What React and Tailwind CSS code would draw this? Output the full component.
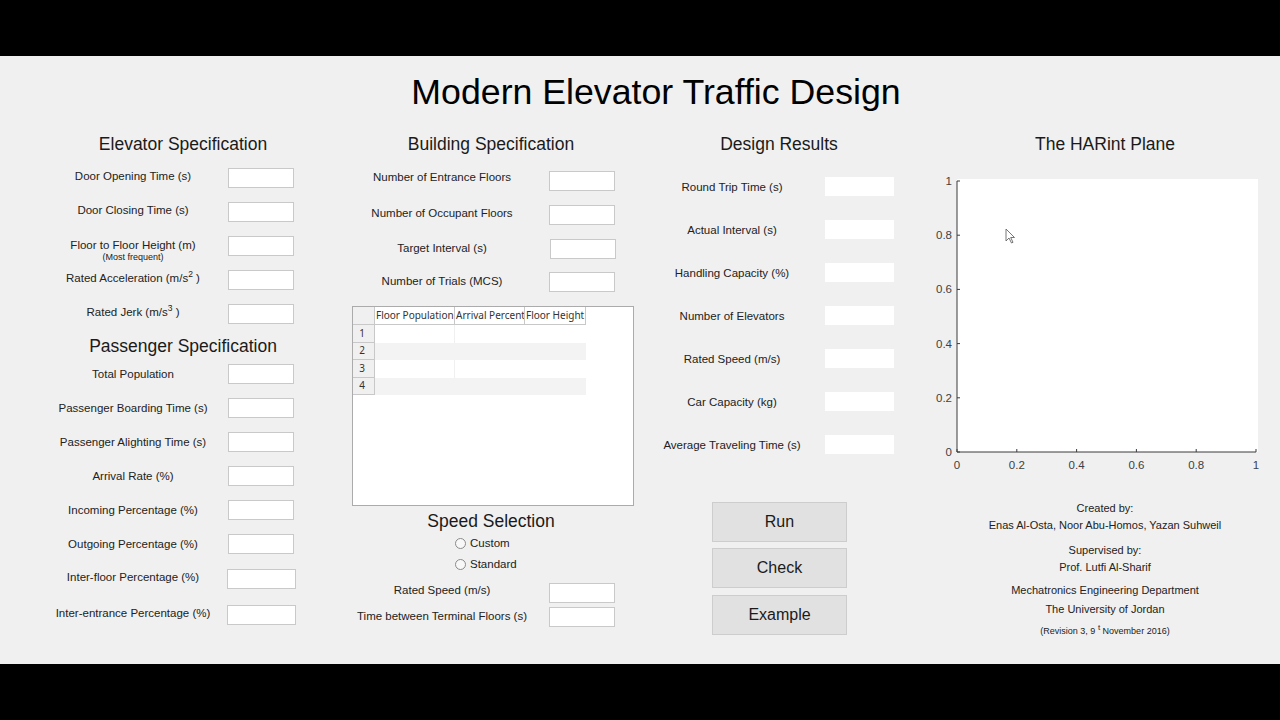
import React from "react";

const font = { fontFamily: '"Liberation Sans", Arial, sans-serif' };

const Field = ({ wide }) => (
  <div
    className={`h-[20px] bg-white border border-[#c9c9c9] ${wide ? "w-[69px] ml-[11px]" : "w-[66px] ml-[12px]"}`}
  />
);

const Row = ({ label, h = "h-[34px]", wide, sub, sup, up }) => (
  <div className={`flex items-center ${h}`}>
    <div className={`w-[166px] text-center text-[11.5px] text-[#222] leading-[13px] ${up ? "pb-[4px]" : ""}`}>
      {sub ? (
        <div className="mt-[8px]">
          <div>{label}</div>
          <div className="text-[9px] leading-[10px]">{sub}</div>
        </div>
      ) : (
        <span>
          {label}
          {sup && (
            <>
              <sup className="text-[8.5px]">{sup}</sup> )
            </>
          )}
        </span>
      )}
    </div>
    <Field wide={wide} />
  </div>
);

const BRow = ({ label, h, shift, pb = "pb-[3px]" }) => (
  <div className={`flex items-center ${h}`}>
    <div className={`w-[188px] text-center text-[11.5px] text-[#222] ${pb}`}>{label}</div>
    <div className={`h-[20px] w-[66px] bg-white border border-[#c9c9c9] ${shift ? "ml-[14px]" : "ml-[13px]"}`} />
  </div>
);

const Result = ({ label }) => (
  <div className="flex items-center h-[43px]">
    <div className="w-[144px] text-center text-[11.5px] text-[#222] pt-[2px]">{label}</div>
    <div className="ml-[21px] w-[69px] h-[19px] bg-white" />
  </div>
);

const Header = ({ children, className = "h-[28px]" }) => (
  <div className={`flex items-center justify-center text-[17.5px] text-[#1a1a1a] ${className}`}>{children}</div>
);

const Radio = ({ label }) => (
  <div className="flex items-center h-[21px] pl-[107px] text-[11.5px] text-[#222]">
    <span className="w-[11px] h-[11px] rounded-full border border-[#8a8a8a] bg-[#f8f8f8] mr-[4px]" />
    {label}
  </div>
);

const Table = () => {
  const cols = [
    ["Floor Population", "w-[80px]"],
    ["Arrival Percent", "w-[70px]"],
    ["Floor Height", "w-[61px]"],
  ];
  return (
    <div
      className="ml-[4px] mt-[8px] w-[282px] h-[200px] bg-white border border-[#ababab]"
      style={{ fontFamily: '"Noto Sans", "Open Sans", sans-serif' }}
    >
      <div className="flex h-[18px] text-[10px] text-[#333]">
        <div className="w-[22px] bg-[#f0f0f0] border-r border-b border-[#c8c8c8]" />
        {cols.map(([t, w]) => (
          <div key={t} className={`${w} border-r border-b border-[#c8c8c8] flex items-center pl-[1px] whitespace-nowrap overflow-hidden`}>
            {t}
          </div>
        ))}
      </div>
      {[1, 2, 3, 4].map((n) => (
        <div key={n} className="flex h-[17.5px] text-[10px] text-[#333]">
          <div className="w-[22px] bg-[#f0f0f0] border-r border-b border-[#c8c8c8] flex items-center justify-center pr-[3px]">{n}</div>
          <div className={`flex w-[211px] ${n % 2 === 0 ? "bg-[#f3f3f3]" : "bg-white"}`}>
            <div className={`w-[80px] ${n % 2 === 1 ? "border-r border-[#f0f0f0]" : ""}`} />
            <div className="w-[70px]" />
          </div>
        </div>
      ))}
    </div>
  );
};

const Plot = () => {
  const x0 = 27, x1 = 326, yt = 13, yb = 284;
  const ticks = [0, 0.2, 0.4, 0.6, 0.8, 1];
  const sx = (v) => x0 + v * (x1 - x0);
  const sy = (v) => yb - v * (yb - yt);
  return (
    <svg width="350" height="310" className="mt-[10px]" style={font}>
      <rect x={x0} y={yt - 2} width={x1 - x0 + 2} height={yb - yt + 2} fill="#ffffff" />
      <line x1={x0} y1={yt} x2={x0} y2={yb} stroke="#3a3a3a" strokeWidth="1" />
      <line x1={x0} y1={yb} x2={x1} y2={yb} stroke="#3a3a3a" strokeWidth="1" />
      {ticks.map((t) => (
        <g key={t}>
          <line x1={sx(t)} y1={yb} x2={sx(t)} y2={yb - 3} stroke="#3a3a3a" />
          <line x1={x0} y1={sy(t)} x2={x0 + 3} y2={sy(t)} stroke="#3a3a3a" />
          <text x={sx(t)} y={yb + 17} fontSize="11.5" fill="#404040" textAnchor="middle">
            {t}
          </text>
          <text x={x0 - 5} y={sy(t) + 4} fontSize="11.5" fill="#404040" textAnchor="end">
            {t}
          </text>
        </g>
      ))}
      <path
        d="M76 61 L76 73 L79 70 L81.5 75 L83 74.3 L80.7 69.5 L84.5 69.5 Z"
        fill="#ffffff"
        stroke="#666"
        strokeWidth="0.9"
        strokeLinejoin="round"
      />
    </svg>
  );
};

const Btn = ({ children, className = "" }) => (
  <button className={`w-[135px] h-[40px] bg-[#e1e1e1] border border-[#cdcdcd] text-[16px] text-[#1a1a1a] ${className}`}>
    {children}
  </button>
);

export default function App() {
  return (
    <div className="w-[1280px] h-[720px] bg-black flex flex-col" style={font}>
      <div className="h-[56px]" />
      <main className="h-[608px] bg-[#f0f0f0] flex flex-col">
        <div className="h-[74px] flex items-center justify-center pl-[32px] text-[35.7px] text-black">
          Modern Elevator Traffic Design
        </div>
        <div className="flex pl-[50px]">
          {/* elevator + passenger */}
          <div className="w-[266px] flex flex-col">
            <Header>Elevator Specification</Header>
            <div className="mt-[3px]">
              <Row label="Door Opening Time (s)" up />
              <Row label="Door Closing Time (s)" up />
              <Row label="Floor to Floor Height (m)" sub="(Most frequent)" />
              <Row label="Rated Acceleration (m/s" sup="2" up />
              <Row label="Rated Jerk (m/s" sup="3" up />
            </div>
            <Header className="h-[26px] pt-[4px]">Passenger Specification</Header>
            <Row label="Total Population" />
            <Row label="Passenger Boarding Time (s)" />
            <Row label="Passenger Alighting Time (s)" />
            <Row label="Arrival Rate (%)" />
            <Row label="Incoming Percentage (%)" />
            <Row label="Outgoing Percentage (%)" />
            <Row label="Inter-floor Percentage (%)" h="h-[36px]" wide up />
            <Row label="Inter-entrance Percentage (%)" h="h-[36px]" wide up />
          </div>

          {/* building */}
          <div className="w-[286px] ml-[32px] flex flex-col">
            <Header>Building Specification</Header>
            <div className="mt-[6px]">
              <BRow label="Number of Entrance Floors" h="h-[34px]" pb="pb-[7px]" />
              <BRow label="Number of Occupant Floors" h="h-[34px]" />
              <BRow label="Target Interval (s)" h="h-[34px]" shift pb="pb-[1px]" />
              <BRow label="Number of Trials (MCS)" h="h-[32px]" pb="pb-[1px]" />
            </div>
            <Table />
            <Header className="h-[27px] pt-[4px]">Speed Selection</Header>
            <Radio label="Custom" />
            <Radio label="Standard" />
            <div className="mt-[5px]">
              <BRow label="Rated Speed (m/s)" h="h-[25px]" />
              <BRow label="Time between Terminal Floors (s)" h="h-[23px]" pb="pb-0" />
            </div>
          </div>

          {/* results */}
          <div className="w-[238px] ml-[26px] flex flex-col">
            <Header>Design Results</Header>
            <div className="mt-[7px]">
              <Result label="Round Trip Time (s)" />
              <Result label="Actual Interval (s)" />
              <Result label="Handling Capacity (%)" />
              <Result label="Number of Elevators" />
              <Result label="Rated Speed (m/s)" />
              <Result label="Car Capacity (kg)" />
              <Result label="Average Traveling Time (s)" />
            </div>
            <div className="mt-[36px] flex flex-col items-center pl-[1px]">
              <Btn>Run</Btn>
              <Btn className="mt-[6px]">Check</Btn>
              <Btn className="mt-[7px]">Example</Btn>
            </div>
          </div>

          {/* plot + credits */}
          <div className="w-[350px] ml-[32px] flex flex-col">
            <Header>The HARint Plane</Header>
            <Plot />
            <div className="mt-[22px] flex flex-col items-center text-[11px] text-[#222] leading-[17px]">
              <div>Created by:</div>
              <div>Enas Al-Osta, Noor Abu-Homos, Yazan Suhweil</div>
              <div className="mt-[8px]">Supervised by:</div>
              <div>Prof. Lutfi Al-Sharif</div>
              <div className="mt-[6px]">Mechatronics Engineering Department</div>
              <div className="mt-[2px]">The University of Jordan</div>
              <div className="mt-[5px] text-[9px]">
                (Revision 3, 9 <sup className="text-[8px]">t</sup> November 2016)
              </div>
            </div>
          </div>
        </div>
      </main>
      <div className="h-[56px]" />
    </div>
  );
}
